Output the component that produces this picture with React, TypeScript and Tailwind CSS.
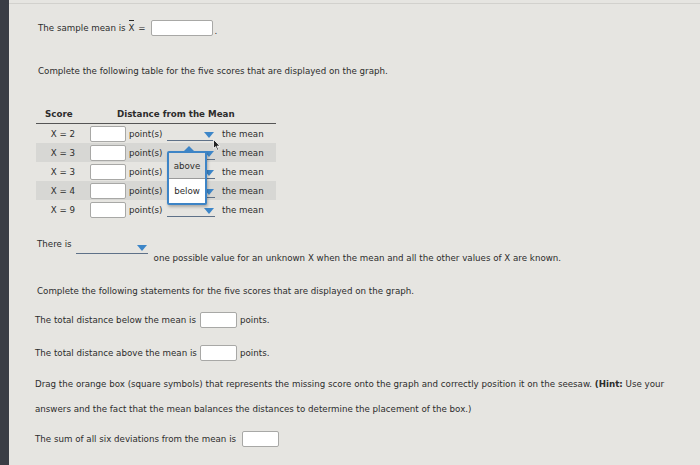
import React from 'react'

function Box({ w = 36 }: { w?: number }) {
  return (
    <span
      className="inline-block h-[16px] shrink-0 rounded-[2px] border border-[#a8a8a6] bg-white"
      style={{ width: w }}
    />
  )
}

function Caret() {
  return (
    <svg width="10" height="6" viewBox="0 0 10 6" className="block">
      <path d="M0 0 L10 0 L5 6 Z" fill="#3d86c8" />
    </svg>
  )
}

function Dropdown({ w = 48, h = 15 }: { w?: number; h?: number }) {
  return (
    <span
      className="relative block shrink-0 border-b border-[#5e7188]"
      style={{ width: w, height: h }}
    >
      <span className="absolute right-[1px] bottom-[2px]">
        <Caret />
      </span>
    </span>
  )
}

const rows = [
  { label: 'X = 2', shaded: false },
  { label: 'X = 3', shaded: true },
  { label: 'X = 3', shaded: false },
  { label: 'X = 4', shaded: true },
  { label: 'X = 9', shaded: false },
]

function ScoreTable() {
  return (
    <div className="relative ml-[27px] mt-[28px] w-[240px]">
      {/* header */}
      <div className="flex h-[19px] items-center border-b border-[#555] font-bold">
        <div className="w-[54px] pl-[9px]">Score</div>
        <div className="pl-[27px]">Distance from the Mean</div>
      </div>
      {rows.map((r, i) => (
        <div
          key={i}
          className={`flex h-[19px] items-center ${r.shaded ? 'bg-[#d7d7d4]' : ''}`}
        >
          <div className="w-[54px] text-center">{r.label}</div>
          <Box />
          <span className="ml-[3px] w-[38px]">point(s)</span>
          <Dropdown />
          <span className="ml-[7px]">the mean</span>
        </div>
      ))}

      {/* open dropdown menu */}
      <div className="absolute left-[131px] top-[46px] w-[40px] rounded-[2px] border-2 border-[#3d84c6] bg-white shadow-[1px_2px_3px_rgba(0,0,0,0.25)]">
        <span className="absolute left-[14px] top-[-7px] h-0 w-0 border-x-[6px] border-b-[6px] border-x-transparent border-b-[#3d84c6]" />
        <div className="flex h-[26px] items-center justify-center border-b border-[#9a9a9a] bg-[#dcdcda]">
          above
        </div>
        <div className="flex h-[24px] items-center justify-center bg-white">below</div>
      </div>

      {/* mouse pointer */}
      <svg
        width="8"
        height="12"
        viewBox="0 0 8 12"
        className="absolute left-[177px] top-[34px]"
      >
        <path
          d="M0.5 0.5 L0.5 9.5 L2.6 7.6 L4.2 11.2 L5.6 10.6 L4 7.1 L7 7.1 Z"
          fill="#222"
          stroke="#fff"
          strokeWidth="0.8"
        />
      </svg>
    </div>
  )
}

export default function App() {
  return (
    <div className="flex h-[465px] w-[700px] overflow-hidden bg-[#e6e5e1] font-['DejaVu_Sans',Verdana,sans-serif] text-[8.7px] leading-[12px] text-[#2c2c2c]">
      {/* dark left edge of the screen */}
      <div className="w-[9px] shrink-0 bg-[#3a3d45]" />

      <div className="flex flex-1 flex-col">
        <div className="h-[4px] border-b border-[#d2d1cd]" />

        {/* sample mean */}
        <div className="ml-[29px] mt-[16px] flex h-[16px] items-center">
          <span>The sample mean is&nbsp;</span>
          <span className="relative">
            X
            <span className="absolute left-[1px] top-[-2px] h-[1px] w-[5px] bg-[#2c2c2c]" />
          </span>
          <span className="ml-[4px] mr-[5px]">=</span>
          <Box w={62} />
          <span className="ml-[2px] mt-[6px]">.</span>
        </div>

        <p className="ml-[29px] mt-[29px]">
          Complete the following table for the five scores that are displayed on the graph.
        </p>

        <ScoreTable />

        {/* there is */}
        <div className="ml-[28px] mt-[19px] flex items-start">
          <span>There is</span>
          <span className="ml-[4px]">
            <Dropdown w={72} h={16} />
          </span>
          <span className="ml-[6px] mt-[14px]">
            one possible value for an unknown X when the mean and all the other values of X are
            known.
          </span>
        </div>

        <p className="ml-[28px] mt-[21px]">
          Complete the following statements for the five scores that are displayed on the graph.
        </p>

        <div className="ml-[26px] mt-[15px] flex h-[16px] items-center">
          <span className="w-[165px]">The total distance below the mean is</span>
          <Box w={37} />
          <span className="ml-[3px]">points.</span>
        </div>

        <div className="ml-[26px] mt-[17px] flex h-[16px] items-center">
          <span className="w-[165px]">The total distance above the mean is</span>
          <Box w={37} />
          <span className="ml-[3px]">points.</span>
        </div>

        <div className="ml-[26px] mt-[11px] leading-[25px]">
          <div className="flex whitespace-pre">
            <span>
              Drag the orange box (square symbols) that represents the missing score onto the graph
              and correctly position it on the seesaw.{' '}
            </span>
            <b>(Hint:</b>
            <span> Use your</span>
          </div>
          <div>
            answers and the fact that the mean balances the distances to determine the placement
            of the box.)
          </div>
        </div>

        <div className="ml-[26px] mt-[9px] flex h-[16px] items-center">
          <span className="w-[207px]">The sum of all six deviations from the mean is</span>
          <Box w={37} />
        </div>
      </div>
    </div>
  )
}
